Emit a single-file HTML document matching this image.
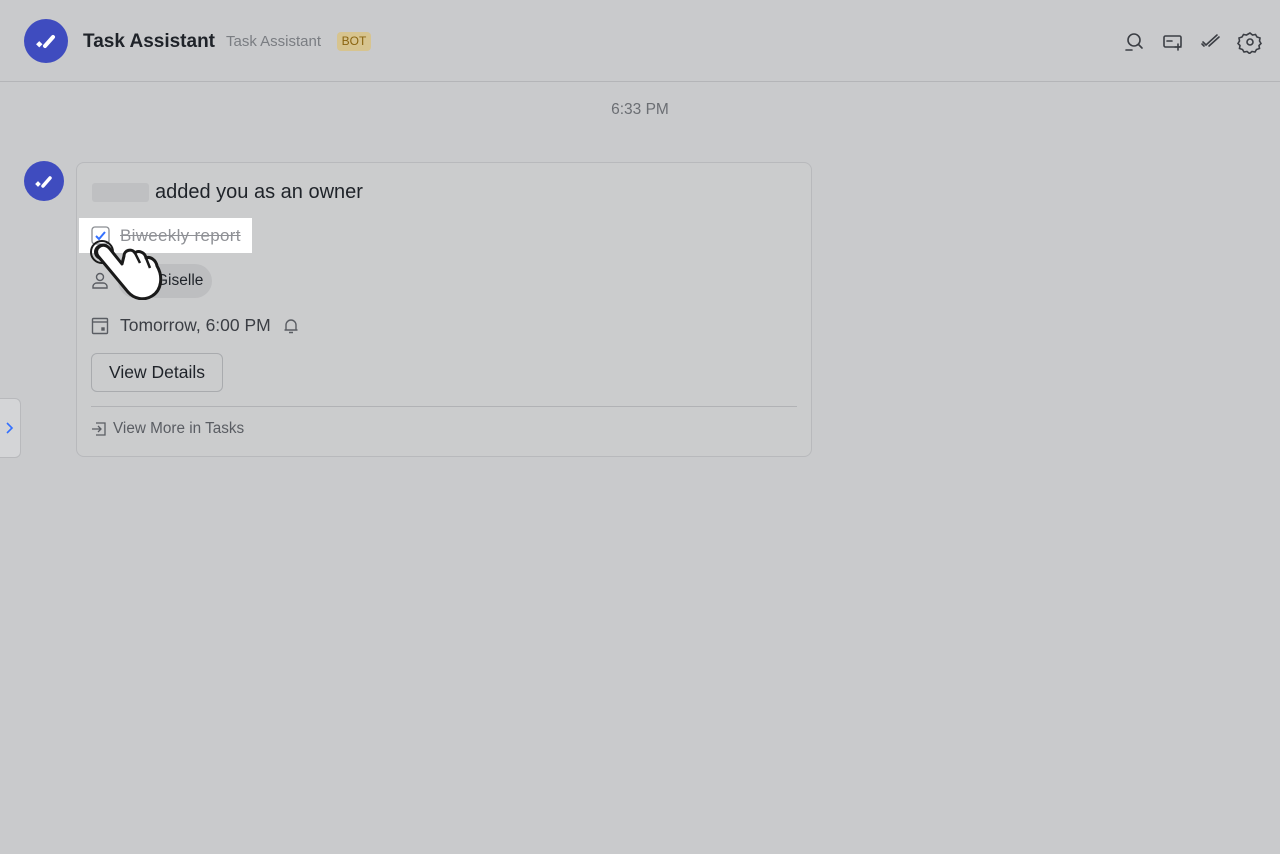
<!DOCTYPE html>
<html><head><meta charset="utf-8"><style>
*{margin:0;padding:0;box-sizing:border-box}
body{width:1280px;height:854px;background:#c9cacc;font-family:"Liberation Sans",sans-serif;position:relative;overflow:hidden;color:#1f2329}
.hdr{position:absolute;left:0;top:0;width:1280px;height:82px;border-bottom:1px solid #b4b5b8}
.av{position:absolute;border-radius:50%;background:#3f4cbf}
.abs{position:absolute;white-space:nowrap}
svg{position:absolute}
.card{position:absolute;left:76px;top:162px;width:736px;height:295px;border:1px solid #b8b9bc;border-radius:8px;background:#cbcccd}
</style></head><body>
<div class="hdr"></div>
<div class="av" style="left:24px;top:19px;width:44px;height:44px"></div>
<svg style="left:24px;top:19px" width="44" height="44" viewBox="0 0 44 44"><rect x="13" y="23" width="4.5" height="4.5" fill="#fff" transform="rotate(45 15.25 25.25)"/><path d="M21 27 L29 18" stroke="#fff" stroke-width="4" stroke-linecap="round"/></svg>
<div class="abs" style="left:83px;top:31px;font-size:19px;font-weight:bold;color:#1f2329">Task Assistant</div>
<div class="abs" style="left:226px;top:33px;font-size:15px;color:#7a7d82">Task Assistant</div>
<div class="abs" style="left:337px;top:32px;width:34px;height:19px;background:#d7c48f;border-radius:4px;font-size:12px;color:#8a6410;text-align:center;line-height:19px">BOT</div>
<svg style="left:1122px;top:30px" width="140" height="24" viewBox="0 0 140 24" fill="none" stroke="#3b3e44" stroke-width="1.6" stroke-linecap="round">
<circle cx="12" cy="10" r="6"/><path d="M16.5 14.5 L20 18 M4 20 H10"/>
<rect x="42" y="6" width="17" height="11" rx="1.5"/><path d="M45 11 H50 M56 14 V20 M53 17 H59"/>
<path d="M81 12 L84 15 L95 5 M87 16 L97 7" /><path d="M80 14 l2 2"/>
<circle cx="128" cy="12" r="3"/><path d="M128 3 l2.5 2 3-.5 1.5 2.5 3 1 -.5 3 1.5 2.5 -2 2 .5 3 -3 1 -1.5 2.5 -3-.5 -2.5 2 -2.5-2 -3 .5 -1.5-2.5 -3-1 .5-3 -2-2 1.5-2.5 -.5-3 3-1 1.5-2.5 3 .5z"/>
</svg>
<div class="abs" style="left:600px;top:98px;width:80px;height:24px;font-size:15.5px;color:#6b6e73;text-align:center;line-height:24px">6:33 PM</div>
<div class="av" style="left:24px;top:161px;width:40px;height:40px"></div>
<svg style="left:24px;top:161px" width="40" height="40" viewBox="0 0 40 40"><rect x="12" y="21" width="4" height="4" fill="#fff" transform="rotate(45 14 23)"/><path d="M19 25 L26 17" stroke="#fff" stroke-width="3.5" stroke-linecap="round"/></svg>
<div class="card"></div>
<div class="abs" style="left:92px;top:183px;width:57px;height:19px;background:#bfc0c2;border-radius:3px"></div>
<div class="abs" style="left:155px;top:181px;font-size:20px;color:#1f2329">added you as an owner</div>
<div class="abs" style="left:79px;top:218px;width:173px;height:35px;background:#fff"></div>
<svg style="left:91px;top:226px" width="20" height="20" viewBox="0 0 20 20"><rect x="1" y="1" width="17" height="17" rx="3" fill="#fff" stroke="#8a8d92" stroke-width="1.3"/><path d="M5 10 L8 13 L14 6" stroke="#3370ff" stroke-width="2" fill="none"/></svg>
<div class="abs" style="left:120px;top:226px;font-size:17px;letter-spacing:0.3px;color:#8f9196;text-decoration:line-through">Biweekly report</div>
<svg style="left:90px;top:270px" width="20" height="20" viewBox="0 0 20 20" fill="none" stroke="#5a5d63" stroke-width="1.4"><circle cx="10" cy="7" r="3.5"/><path d="M3 18 v-2 a4 4 0 0 1 4-3 h6 a4 4 0 0 1 4 3 v2 z"/></svg>
<div class="abs" style="left:118px;top:264px;width:94px;height:34px;background:#bdbec0;border-radius:17px"></div>
<div class="abs" style="left:156px;top:272px;font-size:15.5px;color:#1f2329">Giselle</div>
<svg style="left:88px;top:228px" width="80" height="72" viewBox="0 0 80 72"><circle cx="14" cy="24" r="11" fill="none" stroke="#1a1a1a" stroke-width="2"/><circle cx="14" cy="24" r="7" fill="none" stroke="#1a1a1a" stroke-width="2"/><path d="M11 19 C14 16 19 17 22 21 L34 36 L36 28 C36 22 44 20 47 25 C50 22 57 24 58 30 C62 28 68 32 69 38 C75 48 74 62 64 68 C56 73 46 71 40 64 L10 28 C8 25 8 21 11 19 Z" fill="#fff" stroke="#1a1a1a" stroke-width="3" stroke-linejoin="round"/><path d="M47 25 L52 35 M58 30 L62 40" stroke="#1a1a1a" stroke-width="2.5" fill="none"/></svg>
<svg style="left:90px;top:316px" width="20" height="20" viewBox="0 0 20 20" fill="none" stroke="#5a5d63" stroke-width="1.4"><rect x="2.5" y="2.5" width="15" height="15" rx="1"/><path d="M2.5 6 H17.5"/><rect x="12" y="12" width="2" height="2" fill="#5a5d63"/></svg>
<div class="abs" style="left:120px;top:315px;font-size:17.5px;color:#3b3e44">Tomorrow, 6:00 PM</div>
<svg style="left:282px;top:317px" width="18" height="18" viewBox="0 0 18 18" fill="none" stroke="#5a5d63" stroke-width="1.4"><path d="M4 13 V8 a5 5 0 0 1 10 0 V13 Z M2.5 13 H15.5 M7 15.5 H11"/></svg>
<div class="abs" style="left:91px;top:353px;width:132px;height:39px;border:1px solid #a9abae;border-radius:6px;font-size:17.5px;text-align:center;line-height:37px;color:#1f2329">View Details</div>
<div class="abs" style="left:91px;top:406px;width:706px;height:1px;background:#b1b2b5"></div>
<svg style="left:91px;top:421px" width="16" height="16" viewBox="0 0 16 16" fill="none" stroke="#5a5d63" stroke-width="1.3"><path d="M5 2 H14 V14 H5 M1 8 H10 M7 5 L10 8 L7 11"/></svg>
<div class="abs" style="left:113px;top:420px;font-size:15.3px;color:#5a5d63">View More in Tasks</div>
<div class="abs" style="left:0;top:398px;width:21px;height:60px;background:#d4d5d7;border:1px solid #b8b9bc;border-left:none;border-radius:0 6px 6px 0"></div>
<svg style="left:4px;top:421px" width="12" height="14" viewBox="0 0 12 14"><path d="M3 2 L8 7 L3 12" stroke="#3370ff" stroke-width="1.6" fill="none"/></svg>
</body></html>
